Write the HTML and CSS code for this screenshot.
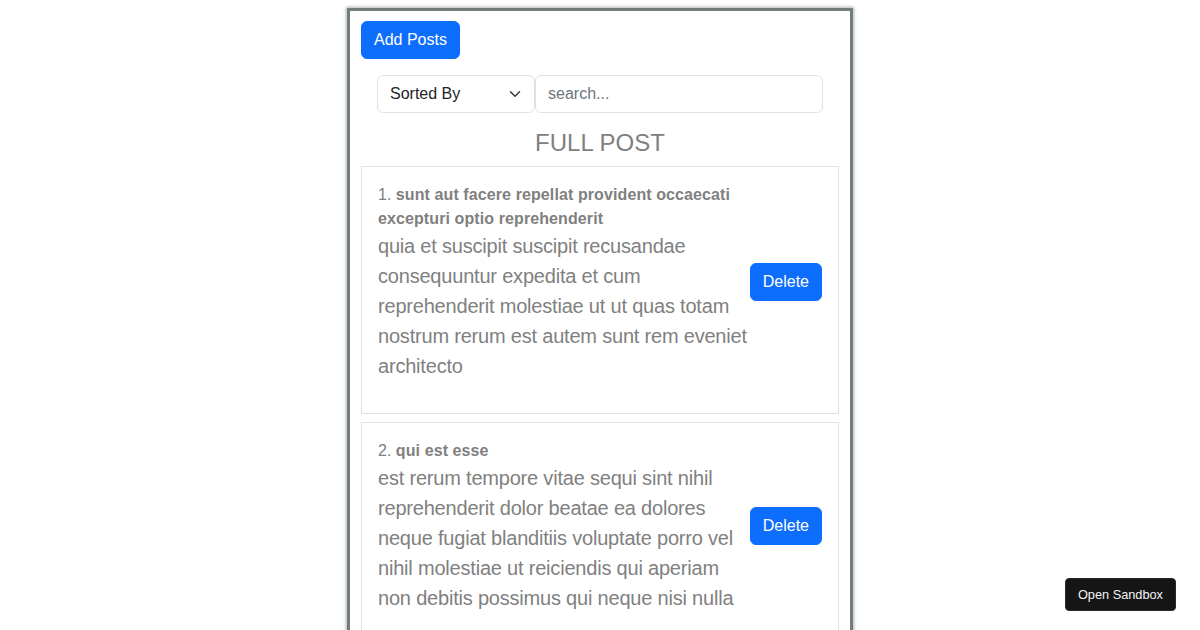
FILE: index.html
```html
<!DOCTYPE html>
<html lang="en">
<head>
<meta charset="utf-8">
<title>Posts</title>
<link rel="stylesheet" href="styles.css">
</head>
<body>
<div class="app">
  <div class="toolbar">
    <button class="btn btn-primary">Add Posts</button>
  </div>
  <div class="filters">
    <div class="select-wrap">
      <select class="form-select">
        <option>Sorted By</option>
        <option>Title</option>
        <option>Body</option>
      </select>
      <svg class="chevron" viewBox="0 0 16 16" width="16" height="12" aria-hidden="true"><path fill="none" stroke="#343a40" stroke-linecap="round" stroke-linejoin="round" stroke-width="2" d="m2 5 6 6 6-6"/></svg>
    </div>
    <input class="form-control" type="text" placeholder="search...">
  </div>
  <h4 class="list-title">FULL POST</h4>
  <div class="post">
    <div class="post-text">
      <div class="post-title">1. <strong>sunt aut facere repellat provident occaecati excepturi optio reprehenderit</strong></div>
      <p class="post-body">quia et suscipit suscipit recusandae consequuntur expedita et cum reprehenderit molestiae ut ut quas totam nostrum rerum est autem sunt rem eveniet architecto</p>
    </div>
    <button class="btn btn-primary">Delete</button>
  </div>
  <div class="post">
    <div class="post-text">
      <div class="post-title">2. <strong>qui est esse</strong></div>
      <p class="post-body">est rerum tempore vitae sequi sint nihil reprehenderit dolor beatae ea dolores neque fugiat blanditiis voluptate porro vel nihil molestiae ut reiciendis qui aperiam non debitis possimus qui neque nisi nulla</p>
    </div>
    <button class="btn btn-primary">Delete</button>
  </div>
</div>
<a class="sandbox-btn" href="#">Open Sandbox</a>
</body>
</html>
```
FILE: styles.css
```css
* { box-sizing: border-box; }

html, body {
  margin: 0;
  padding: 0;
  background: #fff;
  font-family: "Liberation Sans", Arial, sans-serif;
  font-size: 16px;
  line-height: 1.5;
  color: #212529;
}

.app {
  width: 506px;
  margin: 8px auto 0;
  padding: 10px 11px;
  border: 3px solid #737b7b;
  box-shadow: 0 0 3px 1px rgba(110, 120, 120, 0.55);
}

.toolbar { display: flex; }

.btn {
  display: inline-block;
  font-family: inherit;
  font-size: 16px;
  line-height: 24px;
  padding: 6px 12px;
  border: 1px solid transparent;
  border-radius: 6px;
  cursor: pointer;
}

.btn-primary {
  background: #0d6efd;
  border-color: #0d6efd;
  color: #fff;
}

.filters {
  display: flex;
  margin: 16px 16px 16px;
}

.select-wrap {
  position: relative;
  width: 158px;
  flex: none;
}

.form-select {
  appearance: none;
  -webkit-appearance: none;
  width: 100%;
  height: 38px;
  padding: 6px 36px 6px 12px;
  font-family: inherit;
  font-size: 16px;
  line-height: 24px;
  color: #212529;
  background: #fff;
  border: 1px solid #dee2e6;
  border-radius: 6px;
}

.chevron {
  position: absolute;
  right: 12px;
  top: 13px;
  pointer-events: none;
}

.form-control {
  flex: 1;
  min-width: 0;
  height: 38px;
  padding: 6px 12px;
  font-family: inherit;
  font-size: 16px;
  line-height: 24px;
  color: #212529;
  background: #fff;
  border: 1px solid #dee2e6;
  border-radius: 6px;
}

.form-control::placeholder { color: #6c757d; opacity: 1; }

.list-title {
  margin: 0 0 8px;
  text-align: center;
  font-size: 24px;
  font-weight: 400;
  line-height: 1.2;
  color: gray;
}

.post {
  display: flex;
  align-items: center;
  padding: 16px 16px 32px;
  margin-bottom: 8px;
  border: 1px solid #dee2e6;
  color: gray;
}

.post-text { flex: 1; min-width: 0; }

.post-title {
  font-size: 16px;
  line-height: 24px;
}

.post-title strong { font-weight: 700; letter-spacing: 0.1px; }

.post-body {
  margin: 0;
  font-size: 20px;
  line-height: 30px;
  letter-spacing: -0.2px;
}

.post .btn { flex: none; }

.sandbox-btn {
  position: fixed;
  right: 24px;
  bottom: 19px;
  height: 33px;
  padding: 0 12px;
  display: flex;
  align-items: center;
  background: #151515;
  color: #f4f4f4;
  font-size: 12.75px;
  text-decoration: none;
  border-radius: 4px;
  border: 1px solid #2a2a2a;
}
```
